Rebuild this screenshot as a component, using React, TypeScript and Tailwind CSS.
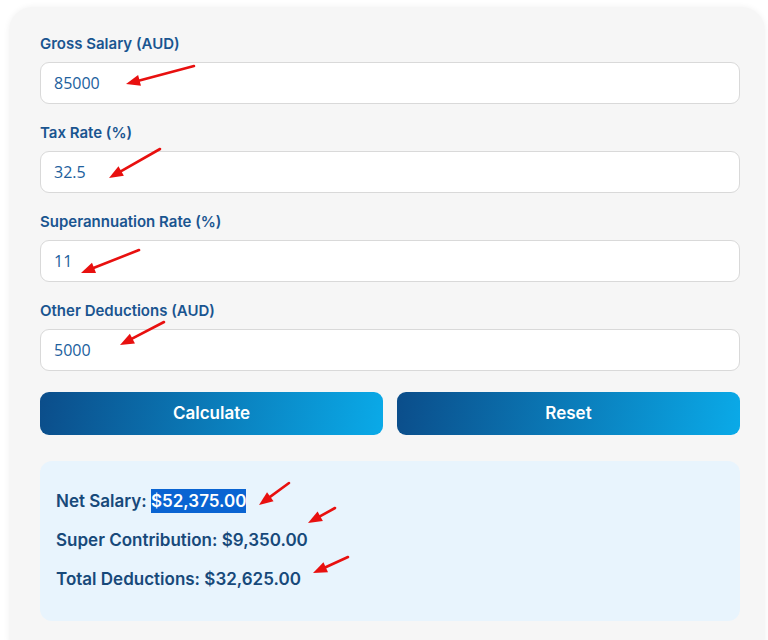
import React from 'react';

const fields = [
  { label: 'Gross Salary (AUD)', value: '85000' },
  { label: 'Tax Rate (%)', value: '32.5' },
  { label: 'Superannuation Rate (%)', value: '11' },
  { label: 'Other Deductions (AUD)', value: '5000' },
];

// tail x, tail y, head x, head y
const arrows: [number, number, number, number][] = [
  [194, 66, 126, 84],
  [160, 149, 109, 178],
  [139, 250, 81, 273],
  [164, 322, 120, 345],
  [289, 483, 259, 505],
  [335, 508, 308, 523],
  [348, 557, 313, 573],
];

const Arrow: React.FC<{ a: [number, number, number, number] }> = ({ a }) => {
  const [x1, y1, x2, y2] = a;
  const dx = x2 - x1;
  const dy = y2 - y1;
  const len = Math.hypot(dx, dy);
  const ux = dx / len;
  const uy = dy / len;
  const hl = 14;
  const hw = 5.5;
  const bx = x2 - ux * hl;
  const by = y2 - uy * hl;
  const pts = `${x2},${y2} ${bx - uy * hw},${by + ux * hw} ${bx + uy * hw},${by - ux * hw}`;
  return (
    <g>
      <line x1={x1} y1={y1} x2={bx + ux * 2} y2={by + uy * 2} stroke="#e8100f" strokeWidth={2.6} strokeLinecap="round" />
      <polygon points={pts} fill="#e8100f" />
    </g>
  );
};

const Field: React.FC<{ label: string; value: string }> = ({ label, value }) => (
  <div className="flex flex-col">
    <label className="text-[15px] leading-[20px] font-semibold text-[#1a5590] mb-[8px]">{label}</label>
    <input
      readOnly
      value={value}
      className="h-[42px] w-full rounded-[9px] border border-[#d9d9d9] bg-white px-[13px] text-[16px] text-[#21609d] outline-none"
      style={{ fontFamily: '"Open Sans", "Noto Sans", sans-serif' }}
    />
  </div>
);

const App = () => {
  return (
    <div className="relative min-h-screen bg-white overflow-hidden" style={{ fontFamily: 'Inter, "Liberation Sans", sans-serif' }}>
      <div className="ml-[9px] mr-[3px] mt-[7px] rounded-[24px] bg-[#f6f6f6] shadow-[0_0_6px_rgba(0,0,0,0.06)] pl-[31px] pr-[25px] pt-[27px] pb-[40px]">
        <div className="flex flex-col gap-[19px]">
          {fields.map((f) => (
            <Field key={f.label} label={f.label} value={f.value} />
          ))}
        </div>

        <div className="mt-[21px] grid grid-cols-2 gap-[14px]">
          <button className="h-[43px] rounded-[9px] bg-linear-[100deg] from-[#0b4d8a] to-[#0aaae8] text-white text-[17px] font-semibold">
            Calculate
          </button>
          <button className="h-[43px] rounded-[9px] bg-linear-[100deg] from-[#0b4d8a] to-[#0aaae8] text-white text-[17px] font-semibold">
            Reset
          </button>
        </div>

        <div className="mt-[26px] rounded-[12px] bg-[#e8f4fd] px-[16px] pt-[27px] pb-[29px] text-[17px] leading-[26px] font-semibold text-[#17497a] flex flex-col gap-[13px]">
          <p>
            Net Salary: <span className="bg-[#0a64d2] text-white py-[2px]">$52,375.00</span>
          </p>
          <p>Super Contribution: $9,350.00</p>
          <p>Total Deductions: $32,625.00</p>
        </div>
      </div>

      <svg className="pointer-events-none absolute left-0 top-0" width="768" height="640" viewBox="0 0 768 640">
        {arrows.map((a, i) => (
          <Arrow key={i} a={a} />
        ))}
      </svg>
    </div>
  );
};

export default App;
